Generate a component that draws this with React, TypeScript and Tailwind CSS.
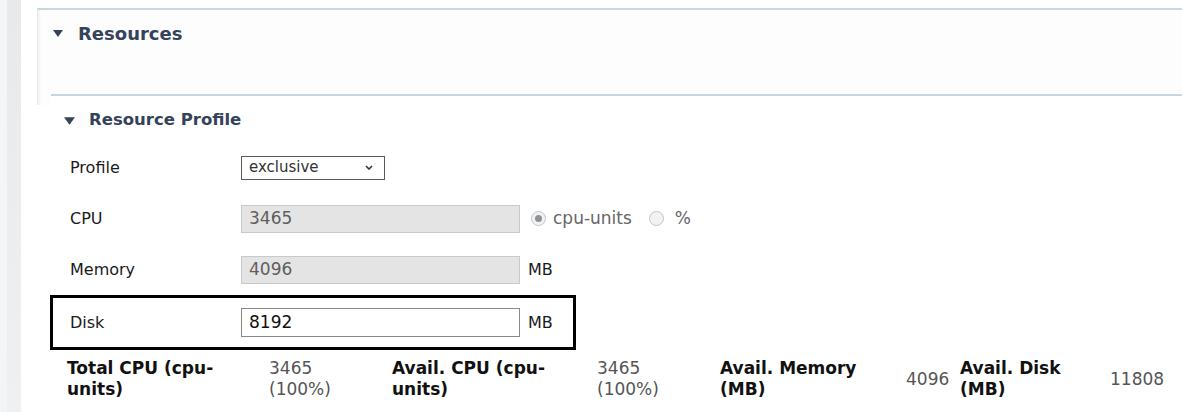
import React from "react";

function Caret({ size = 10 }: { size?: number }) {
  return (
    <svg width={size} height={Math.round(size * 0.7)} viewBox="0 0 10 7" className="shrink-0">
      <path d="M0 0 H10 L5 7 Z" fill="#34435a" />
    </svg>
  );
}

function Radio({ checked }: { checked?: boolean }) {
  return (
    <span className="w-[15px] h-[15px] rounded-full border border-[#c4c4c4] bg-[#f2f2f2] flex items-center justify-center shrink-0">
      {checked && <span className="w-[7px] h-[7px] rounded-full bg-[#8c949b]" />}
    </span>
  );
}

function Row({ label, children }: { label: string; children: React.ReactNode }) {
  return (
    <div className="h-[51px] flex items-center pl-[33px]">
      <div className="w-[171px] text-[16px] text-[#1a1a1a]">{label}</div>
      {children}
    </div>
  );
}

function ReadOnlyInput({ value }: { value: string }) {
  return (
    <div className="w-[279px] h-[28px] bg-[#e4e4e4] border border-[#c9c9c9] flex items-center pl-[7px] text-[17px] text-[#5e5e5e]">
      {value}
    </div>
  );
}

const stats = [
  { label: ["Total CPU (cpu-", "units)"], value: ["3465", "(100%)"], lw: "w-[202px]", vw: "w-[123px]" },
  { label: ["Avail. CPU (cpu-", "units)"], value: ["3465", "(100%)"], lw: "w-[205px]", vw: "w-[123px]" },
];

export default function App() {
  return (
    <div className="w-[1182px] h-[412px] flex bg-white overflow-hidden font-['DejaVu_Sans',sans-serif]">
      {/* left gutter */}
      <div className="w-[7px] bg-[#f4f5f6]" />
      <div className="w-[14px] bg-gradient-to-b from-[#e8e9ea] to-[#eef0f2]" />

      <div className="flex-1 flex flex-col pl-[16px]">
        {/* Resources panel */}
        <div className="mt-[8px] h-[97px] border-t-2 border-[#c8d7de] border-l border-l-[#e9e9e9] shadow-[inset_3px_0_3px_-2px_#ececec] bg-[#fdfdfd] flex flex-col">
          <div className="h-[42px] flex items-center gap-[15px] pl-[15px] pt-[4px]">
            <Caret />
            <span className="text-[18px] font-bold text-[#34435a]">Resources</span>
          </div>
          <div className="mt-[42px] ml-[13px] flex-1 border-t-2 border-[#c6d6dd] bg-white" />
        </div>

        {/* Resource Profile */}
        <div className="h-[37px] flex items-center gap-[14px] pl-[27px] pb-[6px]">
          <Caret size={11} />
          <span className="text-[16.5px] font-bold text-[#34435a]">Resource Profile</span>
        </div>

        <Row label="Profile">
          <div className="w-[144px] h-[24px] border border-[#5a5a5a] bg-white flex items-center justify-between pl-[7px] pr-[11px] text-[15px] text-[#333]">
            <span>exclusive</span>
            <svg width="8" height="5" viewBox="0 0 8 5">
              <path d="M1 1 L4 4 L7 1" fill="none" stroke="#333" strokeWidth="1.6" />
            </svg>
          </div>
        </Row>

        <Row label="CPU">
          <ReadOnlyInput value="3465" />
          <div className="flex items-center ml-[11px] gap-[7px] text-[17px] text-[#666]">
            <Radio checked />
            <span>cpu-units</span>
            <span className="ml-[10px]"><Radio /></span>
            <span className="ml-[4px]">%</span>
          </div>
        </Row>

        <Row label="Memory">
          <ReadOnlyInput value="4096" />
          <span className="ml-[8px] text-[16px] text-[#1a1a1a]">MB</span>
        </Row>

        {/* highlighted Disk row */}
        <div className="ml-[13px] w-[526px] h-[55px] border-[3px] border-black flex items-center pl-[17px]">
          <div className="w-[171px] text-[16px] text-[#1a1a1a]">Disk</div>
          <div className="w-[279px] h-[29px] bg-white border border-[#8a8a8a] flex items-center pl-[7px] text-[17px] text-[#111]">
            8192
          </div>
          <span className="ml-[8px] text-[16px] text-[#1a1a1a]">MB</span>
        </div>

        {/* totals */}
        <div className="mt-[8px] pl-[30px] flex items-center text-[17px] leading-[21px]">
          {stats.map((s) => (
            <React.Fragment key={s.label[0]}>
              <div className={`${s.lw} font-bold text-[#111]`}>
                <div>{s.label[0]}</div>
                <div>{s.label[1]}</div>
              </div>
              <div className={`${s.vw} text-[#555]`}>
                <div>{s.value[0]}</div>
                <div>{s.value[1]}</div>
              </div>
            </React.Fragment>
          ))}
          <div className="w-[186px] font-bold text-[#111]">
            <div>Avail. Memory</div>
            <div>(MB)</div>
          </div>
          <div className="w-[54px] text-[#555]">4096</div>
          <div className="w-[150px] font-bold text-[#111]">
            <div>Avail. Disk</div>
            <div>(MB)</div>
          </div>
          <div className="text-[#555]">11808</div>
        </div>
      </div>
    </div>
  );
}
